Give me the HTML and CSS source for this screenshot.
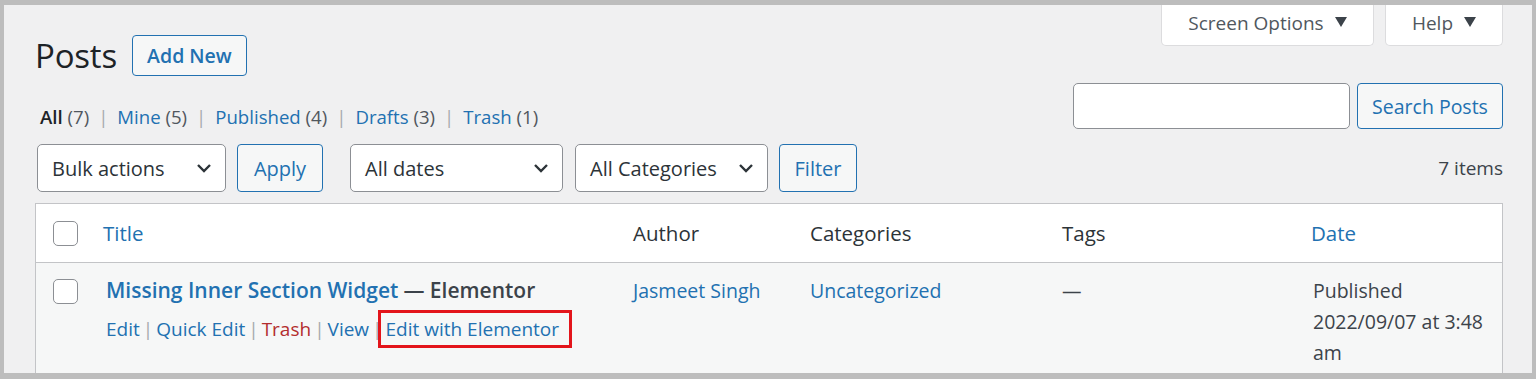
FILE: index.html
```html
<!DOCTYPE html>
<html lang="en">
<head>
<meta charset="utf-8">
<title>Posts</title>
<link rel="stylesheet" href="styles.css">
</head>
<body>
<div class="frame">
  <div class="wrap">
    <div class="top">
      <div class="top-left">
        <div class="heading-row">
          <h1 class="page-title">Posts</h1>
          <a class="btn add-new">Add New</a>
        </div>
        <ul class="subsubsub">
          <li><span class="current">All</span> <span class="count">(7)</span></li>
          <li class="sep">|</li>
          <li><a>Mine</a> <span class="count">(5)</span></li>
          <li class="sep">|</li>
          <li><a>Published</a> <span class="count">(4)</span></li>
          <li class="sep">|</li>
          <li><a>Drafts</a> <span class="count">(3)</span></li>
          <li class="sep">|</li>
          <li><a>Trash</a> <span class="count">(1)</span></li>
        </ul>
      </div>
      <div class="top-right">
        <div class="tabs">
          <div class="tab tab-screen">Screen Options <svg class="tri" viewBox="0 0 12 10" width="12" height="10"><path d="M0 0h12L6 10z" fill="#3c434a"/></svg></div>
          <div class="tab tab-help">Help <svg class="tri" viewBox="0 0 12 10" width="12" height="10"><path d="M0 0h12L6 10z" fill="#3c434a"/></svg></div>
        </div>
        <div class="search-box">
          <div class="search-input"></div>
          <a class="btn search-btn">Search Posts</a>
        </div>
      </div>
    </div>

    <div class="tablenav">
      <div class="nav-left">
        <div class="select sel-bulk"><span>Bulk actions</span><svg class="chev" viewBox="0 0 16 10" width="16" height="10"><path d="M2 2l6 6 6-6" fill="none" stroke="#2c3338" stroke-width="2.4"/></svg></div>
        <a class="btn btn-apply">Apply</a>
        <div class="select sel-dates"><span>All dates</span><svg class="chev" viewBox="0 0 16 10" width="16" height="10"><path d="M2 2l6 6 6-6" fill="none" stroke="#2c3338" stroke-width="2.4"/></svg></div>
        <div class="select sel-cats"><span>All Categories</span><svg class="chev" viewBox="0 0 16 10" width="16" height="10"><path d="M2 2l6 6 6-6" fill="none" stroke="#2c3338" stroke-width="2.4"/></svg></div>
        <a class="btn btn-filter">Filter</a>
      </div>
      <div class="items">7 items</div>
    </div>

    <div class="table">
      <div class="tr thead">
        <div class="td cb"><span class="checkbox"></span></div>
        <div class="td col-title"><a>Title</a></div>
        <div class="td">Author</div>
        <div class="td">Categories</div>
        <div class="td">Tags</div>
        <div class="td"><a>Date</a></div>
      </div>
      <div class="tr trow">
        <div class="td cb"><span class="checkbox"></span></div>
        <div class="td col-title body-title">
          <div class="row-title"><a>Missing Inner Section Widget</a> <span class="post-state">— Elementor</span></div>
          <div class="row-actions">
            <a>Edit</a><span class="bar">|</span><a>Quick Edit</a><span class="bar">|</span><a class="trash">Trash</a><span class="bar">|</span><a>View</a><span class="bar">|</span><a class="highlight">Edit with Elementor</a>
          </div>
        </div>
        <div class="td"><a>Jasmeet Singh</a></div>
        <div class="td"><a>Uncategorized</a></div>
        <div class="td muted">—</div>
        <div class="td date">Published<br>2022/09/07 at 3:48<br>am</div>
      </div>
    </div>
  </div>
</div>
</body>
</html>
```

FILE: styles.css
```css
* { box-sizing: border-box; }

html, body {
  margin: 0;
  padding: 0;
  background: #bdbdbd;
}

body {
  font-family: "Open Sans", "Noto Sans", "Liberation Sans", sans-serif;
  color: #3c434a;
}

a { color: #2271b1; text-decoration: none; }

.frame {
  width: 1536px;
  height: 379px;
  border-style: solid;
  border-color: #bdbdbd;
  border-width: 5px 4px 6px 4px;
  background: #f0f0f1;
  overflow: hidden;
}

.wrap {
  padding: 0 29px 0 31px;
}

/* top area */
.top {
  display: flex;
  justify-content: space-between;
  align-items: flex-start;
}

.top-left {
  padding-top: 30px;
}

.heading-row {
  display: flex;
  align-items: center;
  gap: 15px;
  height: 41px;
}

.page-title {
  margin: 0;
  font-size: 33px;
  font-weight: 400;
  color: #1d2327;
  line-height: 41px;
  letter-spacing: -0.2px;
}

.btn {
  display: inline-flex;
  align-items: center;
  justify-content: center;
  border: 1px solid #2271b1;
  border-radius: 4px;
  background: #f6f7f7;
  color: #2271b1;
  font-size: 20px;
}

.add-new {
  width: 115px;
  height: 41px;
  font-weight: 600;
  font-size: 19.5px;
}

.subsubsub {
  list-style: none;
  margin: 29px 0 0 5px;
  padding: 0;
  display: flex;
  gap: 9px;
  font-size: 18.6px;
  line-height: 24px;
}

.subsubsub .current { color: #1d2327; font-weight: 600; }
.subsubsub .count { color: #50575e; }
.subsubsub .sep { color: #a7aaad; }

.top-right {
  display: flex;
  flex-direction: column;
  align-items: flex-end;
}

.tabs {
  display: flex;
  gap: 11px;
}

.tab {
  height: 41px;
  background: #fff;
  border: 1px solid #dcdcde;
  border-top: none;
  border-radius: 0 0 5px 5px;
  color: #50575e;
  font-size: 19px;
  display: flex;
  align-items: center;
  justify-content: center;
  padding-bottom: 4px;
}

.tab-screen { width: 213px; }
.tab-help { width: 118px; }

.tri { display: block; margin-left: 11px; margin-top: -2px; }

.search-box {
  margin-top: 37px;
  display: flex;
  gap: 7px;
}

.search-input {
  width: 277px;
  height: 46px;
  background: #fff;
  border: 1px solid #8c8f94;
  border-radius: 5px;
}

.search-btn {
  width: 146px;
  height: 46px;
  font-size: 19.5px;
}

/* tablenav */
.tablenav {
  margin-top: 15px;
  display: flex;
  justify-content: space-between;
  align-items: center;
  padding-left: 2px;
}

.nav-left {
  display: flex;
  align-items: center;
}

.select {
  height: 48px;
  background: #fff;
  border: 1px solid #8c8f94;
  border-radius: 5px;
  display: flex;
  align-items: center;
  justify-content: space-between;
  padding: 0 13px 0 14px;
  font-size: 20px;
  color: #2c3338;
}

.chev { display: block; }

.sel-bulk { width: 189px; }
.btn-apply { width: 86px; height: 48px; margin-left: 11px; }
.sel-dates { width: 213px; margin-left: 27px; }
.sel-cats { width: 193px; margin-left: 12px; }
.btn-filter { width: 78px; height: 48px; margin-left: 11px; }

.items {
  font-size: 19px;
  color: #3c434a;
}

/* table */
.table {
  margin-top: 11px;
  border: 1px solid #c3c4c7;
  background: #fff;
}

.tr {
  display: grid;
  grid-template-columns: 52px 530px 177px 252px 249px 1fr;
}

.td {
  padding-left: 15px;
}

.td.cb { padding-left: 17px; }

.thead {
  height: 59px;
  align-items: center;
  border-bottom: 1px solid #c3c4c7;
  font-size: 20.5px;
  color: #2c3338;
}

.checkbox {
  display: block;
  width: 25px;
  height: 25px;
  border: 1px solid #8c8f94;
  border-radius: 5px;
  background: #fff;
}

.trow {
  background: #f6f7f7;
  height: 140px;
  padding-top: 12px;
  font-size: 19.5px;
  line-height: 31px;
}

.trow .cb { padding-top: 4px; }

.body-title { padding-left: 18px; }

.row-title a, .post-state {
  font-weight: 600;
  font-size: 21px;
}

.post-state { color: #3c434a; }

.row-actions {
  margin-top: 8px;
  font-size: 19px;
  line-height: 31px;
}

.row-actions .bar {
  color: #a7aaad;
  margin: 0 3px;
}

.row-actions .trash { color: #b32d2e; }

.highlight { position: relative; }

.highlight::after {
  content: "";
  position: absolute;
  left: -8px;
  right: -13px;
  top: -6px;
  bottom: -6px;
  border: 3px solid #e3151b;
}

.muted { color: #3c434a; }

.date { color: #3c434a; padding-left: 17px; }
```
